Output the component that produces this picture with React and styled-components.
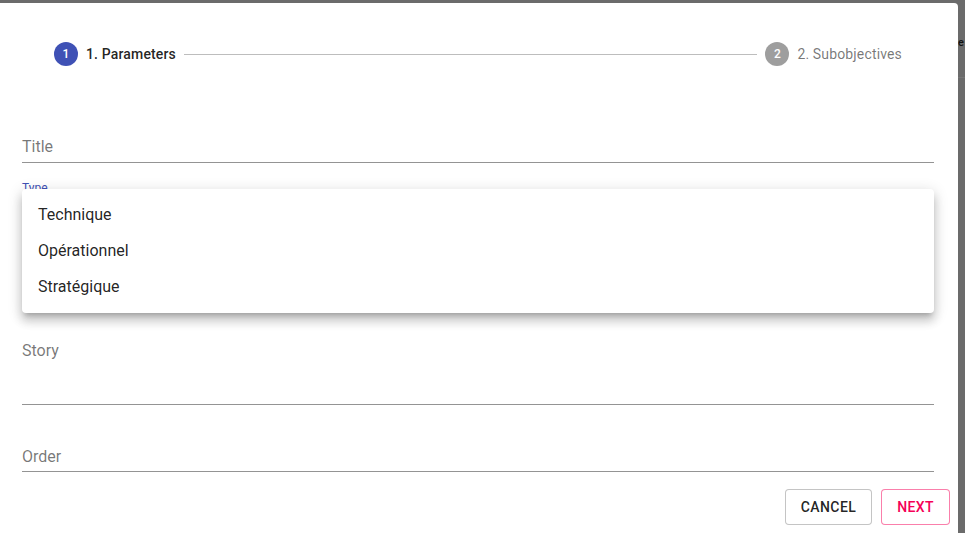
import React from 'react';
import styled, { createGlobalStyle } from 'styled-components';

const GlobalStyle = createGlobalStyle`
  html, body {
    margin: 0;
    height: 100%;
    overflow: hidden;
    background: #6b6b6b;
  }
  body {
    font-family: Roboto, "Liberation Sans", Arial, sans-serif;
  }
`;

const Screen = styled.div`
  display: flex;
  height: 533px;
  padding-top: 3px;
  box-sizing: border-box;
`;

const Dialog = styled.div`
  position: relative;
  flex: none;
  width: 958px;
  height: 560px;
  background: #fff;
  border-top-right-radius: 4px;
  display: flex;
  flex-direction: column;
`;

const Backdrop = styled.div`
  flex: 1;
  overflow: hidden;
  padding-top: 33px;
`;

const BehindText = styled.div`
  font-size: 11px;
  line-height: 14px;
  font-weight: 500;
  color: #111;
`;

const BehindRule = styled.div`
  margin-top: 27px;
  border-top: 1px solid rgba(255, 255, 255, 0.08);
`;

const Content = styled.div`
  display: flex;
  flex-direction: column;
  padding: 15px 24px 0 22px;
`;

const Stepper = styled.div`
  display: flex;
  align-items: center;
  padding: 24px;
`;

const Step = styled.div`
  display: flex;
  align-items: center;
  padding: 0 8px;
`;

const StepIcon = styled.div`
  width: 24px;
  height: 24px;
  border-radius: 50%;
  background: ${p => (p.$active ? '#3f51b5' : '#9e9e9e')};
  color: #fff;
  font-size: 12px;
  font-weight: 500;
  display: flex;
  align-items: center;
  justify-content: center;
  margin-right: 8px;
`;

const StepText = styled.span`
  font-size: 14px;
  line-height: 20px;
  letter-spacing: 0.15px;
  font-weight: ${p => (p.$active ? 500 : 400)};
  color: ${p => (p.$active ? 'rgba(0,0,0,0.87)' : 'rgba(0,0,0,0.54)')};
`;

const Connector = styled.div`
  flex: 1;
  border-top: 1px solid #bdbdbd;
`;

const Field = styled.div`
  margin-top: ${p => p.$mt}px;
  padding-bottom: ${p => p.$pb}px;
  border-bottom: 1px solid rgba(0, 0, 0, 0.42);
`;

const Label = styled.div`
  font-size: 16px;
  line-height: 19px;
  color: rgba(0, 0, 0, 0.54);
`;

const ShrunkLabel = styled.div`
  font-size: 12px;
  line-height: 14px;
  color: #3f51b5;
`;

const Actions = styled.div`
  display: flex;
  justify-content: flex-end;
  gap: 9px;
  margin-top: 9px;
  padding: 8px;
`;

const Button = styled.button`
  min-width: 64px;
  height: 36px;
  padding: 0 15px;
  background: #fff;
  border: 1px solid ${p => (p.$secondary ? 'rgba(245,0,87,0.5)' : 'rgba(0,0,0,0.23)')};
  border-radius: 4px;
  color: ${p => (p.$secondary ? '#f50057' : 'rgba(0,0,0,0.87)')};
  font-family: inherit;
  font-size: 14px;
  font-weight: 500;
  letter-spacing: 0.4px;
  text-transform: uppercase;
  cursor: pointer;
`;

const Menu = styled.ul`
  position: absolute;
  top: 186px;
  left: 22px;
  width: 912px;
  margin: 0;
  padding: 8px 0;
  list-style: none;
  background: #fff;
  border-radius: 4px;
  box-shadow: 0px 5px 5px -3px rgba(0,0,0,0.2), 0px 8px 10px 1px rgba(0,0,0,0.14), 0px 3px 14px 2px rgba(0,0,0,0.12);
`;

const MenuItem = styled.li`
  padding: 6px 16px;
  font-size: 16px;
  line-height: 24px;
  color: rgba(0, 0, 0, 0.87);
`;

const types = ['Technique', 'Opérationnel', 'Stratégique'];

const App = () => {
  return (
    <>
      <GlobalStyle />
      <Screen>
        <Dialog>
          <Content>
            <Stepper>
              <Step>
                <StepIcon $active>1</StepIcon>
                <StepText $active>1. Parameters</StepText>
              </Step>
              <Connector />
              <Step>
                <StepIcon>2</StepIcon>
                <StepText>2. Subobjectives</StepText>
              </Step>
            </Stepper>

            <Field $mt={47} $pb={6}>
              <Label>Title</Label>
            </Field>
            <Field $mt={18} $pb={30}>
              <ShrunkLabel>Type</ShrunkLabel>
            </Field>
            <Field $mt={115} $pb={44}>
              <Label>Story</Label>
            </Field>
            <Field $mt={42} $pb={5}>
              <Label>Order</Label>
            </Field>
          </Content>

          <Actions>
            <Button>Cancel</Button>
            <Button $secondary>Next</Button>
          </Actions>

          <Menu>
            {types.map(t => (
              <MenuItem key={t}>{t}</MenuItem>
            ))}
          </Menu>
        </Dialog>
        <Backdrop>
          <BehindText>e</BehindText>
          <BehindRule />
        </Backdrop>
      </Screen>
    </>
  );
};

export default App;
